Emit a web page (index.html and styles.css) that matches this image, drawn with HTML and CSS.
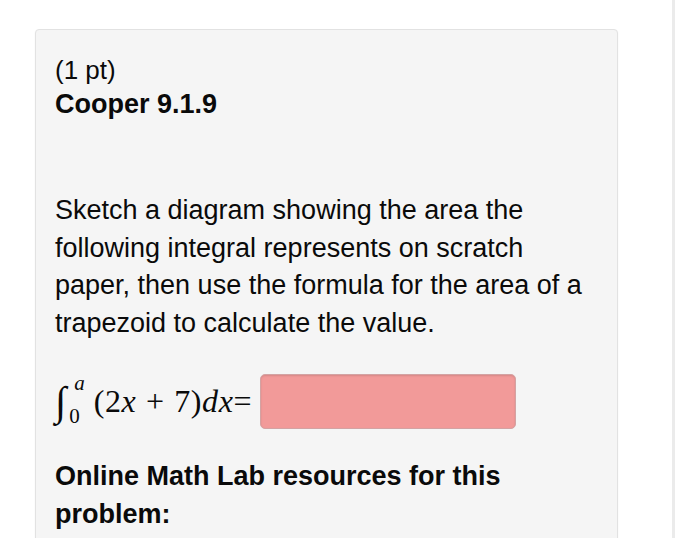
FILE: index.html
```html
<!DOCTYPE html>
<html lang="en">
<head>
<meta charset="utf-8">
<title>Cooper 9.1.9</title>
<link rel="stylesheet" href="styles.css">
</head>
<body>
<div class="page">
  <main class="main">
    <section class="card">
      <div class="pts">(1 pt)</div>
      <div class="title">Cooper 9.1.9</div>
      <p class="prompt">Sketch a diagram showing the area the following integral represents on scratch paper, then use the formula for the area of a trapezoid to calculate the value.</p>
      <div class="answer-row">
        <span class="int">∫</span>
        <span class="lim"><span class="up">a</span><span class="lo">0</span></span>
        <span class="expr">(2<i>x</i><span class="op">+</span>7)<i>dx</i>=</span>
        <span class="answer-box"></span>
      </div>
      <div class="resources">Online Math Lab resources for this problem:</div>
    </section>
  </main>
  <div class="rule"></div>
</div>
</body>
</html>
```
FILE: styles.css
```css
html, body {
  margin: 0;
  padding: 0;
  background: #ffffff;
}
body {
  font-family: "Liberation Sans", Arial, sans-serif;
  color: #0a0a0a;
}
.page {
  display: flex;
  height: 538px;
  overflow: hidden;
}
.main {
  width: 672px;
  flex: none;
  padding: 29px 0 0 35px;
  box-sizing: border-box;
}
.rule {
  width: 3px;
  flex: none;
  background: #ebebeb;
}
.card {
  width: 583px;
  box-sizing: border-box;
  min-height: 560px;
  background: #f5f5f5;
  border: 1px solid #e2e2e2;
  border-radius: 4px;
  box-shadow: 0 1px 2px rgba(0,0,0,0.05);
  padding: 23px 19px 0 19px;
}
.pts {
  font-size: 26px;
  line-height: 34px;
}
.title {
  font-size: 27px;
  font-weight: bold;
  line-height: 34px;
}
.prompt {
  margin: 71px 0 0 0;
  font-size: 27px;
  line-height: 37.6px;
}
.answer-row {
  margin-top: 31.5px;
  height: 55px;
  display: flex;
  align-items: center;
  font-family: "Liberation Serif", "Times New Roman", serif;
}
.int {
  font-size: 41px;
  line-height: 41px;
  font-style: italic;
}
.lim {
  display: flex;
  flex-direction: column;
  align-items: flex-start;
  gap: 12px;
  font-size: 21px;
  line-height: 21px;
  margin-left: 3px;
  margin-bottom: 2px;
}
.lim .up {
  font-style: italic;
  padding-left: 5px;
}
.expr {
  font-size: 32px;
  line-height: 32px;
  letter-spacing: 0.6px;
  margin-left: 9px;
  white-space: nowrap;
}
.expr .op {
  margin: 0 0.3em;
}
.answer-box {
  width: 256px;
  height: 55px;
  box-sizing: border-box;
  margin-left: 8px;
  background: #f29a99;
  border: 1px solid #d3a3a3;
  border-radius: 5px;
  box-shadow: inset 0 1px 2px rgba(0,0,0,0.12);
}
.resources {
  margin-top: 28px;
  font-size: 27px;
  font-weight: bold;
  line-height: 38.5px;
}
```
